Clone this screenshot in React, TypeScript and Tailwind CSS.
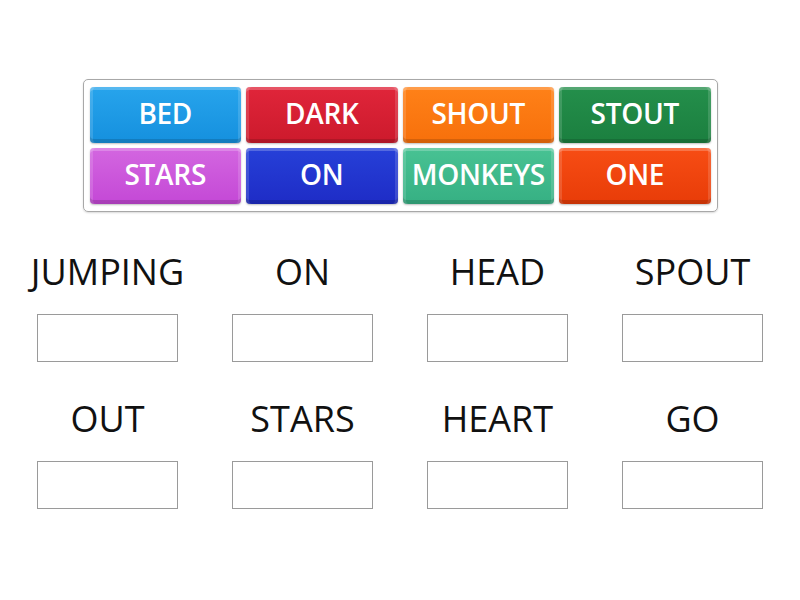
import React from "react";

const tiles = [
  { label: "BED", bg: "bg-[linear-gradient(#27a4ec,#1590de)]" },
  { label: "DARK", bg: "bg-[linear-gradient(#e0253a,#cc1a2c)]" },
  { label: "SHOUT", bg: "bg-[linear-gradient(#ff8118,#f7700b)]" },
  { label: "STOUT", bg: "bg-[linear-gradient(#248f4b,#1b7f3f)]" },
  { label: "STARS", bg: "bg-[linear-gradient(#d366e0,#c448d6)]" },
  { label: "ON", bg: "bg-[linear-gradient(#2640d8,#1e2cc6)]" },
  { label: "MONKEYS", bg: "bg-[linear-gradient(#48c293,#36b083)]" },
  { label: "ONE", bg: "bg-[linear-gradient(#f74d14,#e83c08)]" },
];

const targets = ["JUMPING", "ON", "HEAD", "SPOUT", "OUT", "STARS", "HEART", "GO"];

function Tile({ label, bg }: { label: string; bg: string }) {
  return (
    <div
      className={`${bg} h-[56px] rounded-[4px] flex items-center justify-center pb-[4px] text-white font-semibold text-[28px] tracking-[-0.3px] shadow-[inset_0_3px_0_rgba(255,255,255,0.22),inset_0_-4px_0_rgba(0,0,0,0.14),inset_3px_0_0_rgba(255,255,255,0.14),inset_-3px_0_0_rgba(255,255,255,0.14),0_1px_2px_rgba(0,0,0,0.25)]`}
    >
      {label}
    </div>
  );
}

export default function App() {
  return (
    <div className="w-[800px] h-[600px] bg-white overflow-hidden font-['Open_Sans',sans-serif]">
      <div className="pt-[79px]">
        <div className="mx-auto w-[635px] h-[133px] border border-[#a8a8a8] rounded-[5px] px-[6px] pt-[7px] shadow-[0_1px_2px_rgba(0,0,0,0.15)]">
          <div className="grid grid-cols-4 gap-x-[5px] gap-y-[5px]">
            {tiles.map((t) => (
              <Tile key={t.label} label={t.label} bg={t.bg} />
            ))}
          </div>
        </div>
      </div>

      <div className="px-[10px] pt-[36px] grid grid-cols-4 gap-y-[33px]">
        {targets.map((w, i) => (
          <div key={i} className="flex flex-col items-center">
            <div className="text-[36px] leading-[48px] text-[#111] h-[48px]">{w}</div>
            <div className="mt-[18px] w-[141px] h-[48px] border border-[#9a9a9a] bg-white" />
          </div>
        ))}
      </div>
    </div>
  );
}
